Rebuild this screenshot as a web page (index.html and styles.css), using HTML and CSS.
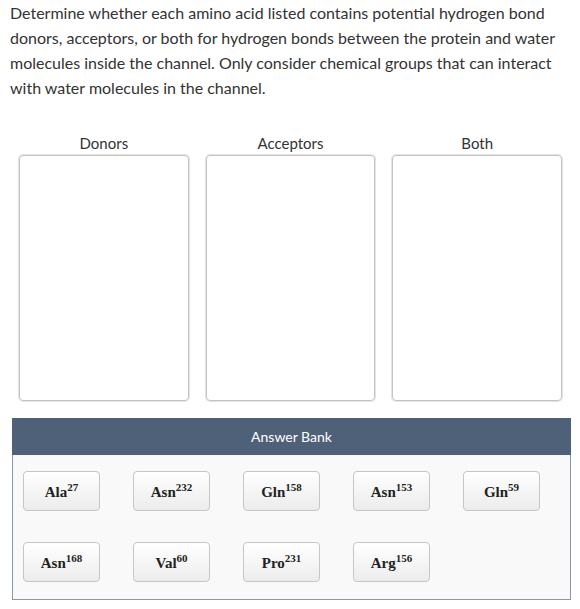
FILE: index.html
```html
<!doctype html>
<html>
  <head>
    <title>Hydrogen Bond Sorting</title>
    <meta charset="utf-8"/>
    <link rel="stylesheet" href="styles.css">
  </head>
  <body>
    <p class="prompt">Determine whether each amino acid listed contains potential hydrogen bond donors, acceptors, or both for hydrogen bonds between the protein and water molecules inside the channel. Only consider chemical groups that can interact with water molecules in the channel.</p>
    <div class="bins">
      <div class="bin">
        <div class="bin-label">Donors</div>
        <div class="bin-box"></div>
      </div>
      <div class="bin">
        <div class="bin-label">Acceptors</div>
        <div class="bin-box"></div>
      </div>
      <div class="bin">
        <div class="bin-label">Both</div>
        <div class="bin-box"></div>
      </div>
    </div>
    <div class="bank">
      <div class="bank-head">Answer Bank</div>
      <div class="bank-body">
        <div class="chip"><span>Ala<sup>27</sup></span></div>
        <div class="chip"><span>Asn<sup>232</sup></span></div>
        <div class="chip"><span>Gln<sup>158</sup></span></div>
        <div class="chip"><span>Asn<sup>153</sup></span></div>
        <div class="chip"><span>Gln<sup>59</sup></span></div>
        <div class="chip"><span>Asn<sup>168</sup></span></div>
        <div class="chip"><span>Val<sup>60</sup></span></div>
        <div class="chip"><span>Pro<sup>231</sup></span></div>
        <div class="chip"><span>Arg<sup>156</sup></span></div>
      </div>
    </div>
  </body>
</html>
```
FILE: styles.css
```css
*{
  box-sizing:border-box;
}
html,body{
  margin:0;
  padding:0;
  background:#fff;
}
body{
  font-family:Lato,"Open Sans",sans-serif;
  color:#333;
  width:580px;
}
.prompt{
  margin:0;
  padding:0 20px 0 10px;
  font-size:16px;
  line-height:25px;
}
.bins{
  display:grid;
  grid-template-columns:repeat(3,1fr);
  column-gap:17px;
  margin:33px 18px 0 19px;
}
.bin-label{
  text-align:center;
  font-size:15px;
  line-height:20px;
  margin-bottom:2px;
}
.bin-box{
  height:246px;
  border:1px solid #c4c4c4;
  border-radius:4px;
  box-shadow:0 0 0 1px #e4e4e4;
}
.bank{
  margin:17px 9px 0 12px;
}
.bank-head{
  background:#4f6179;
  color:#fff;
  text-align:center;
  font-size:14px;
  height:37px;
  line-height:37px;
}
.bank-body{
  background:#f9f9f9;
  border:1px solid #8d98a6;
  border-top:none;
  display:flex;
  flex-wrap:wrap;
  gap:31px 33px;
  padding:16px 10px 17px;
}
.chip{
  width:77px;
  height:40px;
  border:1px solid #c6c6c6;
  border-radius:4px;
  background:linear-gradient(#ffffff,#ececec);
  font-family:"Liberation Serif",serif;
  font-weight:bold;
  font-size:15px;
  color:#222;
  display:flex;
  align-items:center;
  justify-content:center;
  padding-top:3px;
}
.chip sup{
  font-size:11px;
  vertical-align:6px;
  line-height:0;
}
```
